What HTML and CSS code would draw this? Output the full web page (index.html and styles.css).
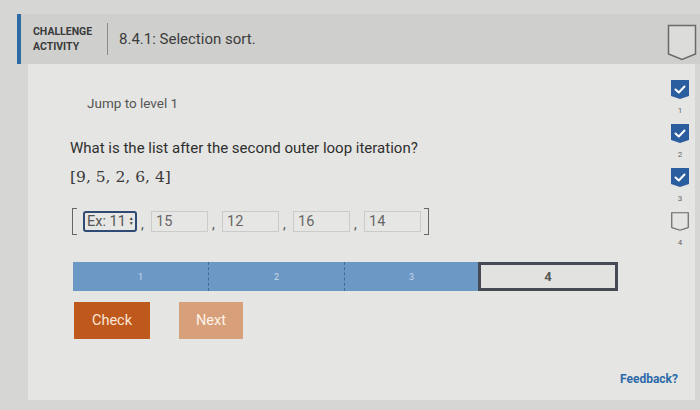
FILE: index.html
```html
<!DOCTYPE html>
<html>
<head>
<meta charset="utf-8">
<link rel="stylesheet" href="styles.css">
</head>
<body>
<div class="page">
  <div class="header">
    <div class="label">CHALLENGE<br>ACTIVITY</div>
    <div class="divider"></div>
    <div class="title">8.4.1: Selection sort.</div>
    <svg class="bigbox" width="30" height="37" viewBox="0 0 30 37">
      <path d="M1.5 1.5 H28.5 V30 L15 35.5 L1.5 30 Z" fill="#dcdcda" stroke="#6a6a6a" stroke-width="1.5"/>
    </svg>
  </div>
  <div class="card">
    <div class="content">
      <div class="main">
        <div class="jump">Jump to level 1</div>
        <div class="question">What is the list after the second outer loop iteration?</div>
        <div class="list">[9, 5, 2, 6, 4]</div>
        <div class="answer">
          <span class="bracket left"></span>
          <span class="inp active">Ex: 11<span class="spin">&#9650;<br>&#9660;</span></span>
          <span class="comma">,</span>
          <span class="inp">15</span>
          <span class="comma">,</span>
          <span class="inp">12</span>
          <span class="comma">,</span>
          <span class="inp">16</span>
          <span class="comma">,</span>
          <span class="inp">14</span>
          <span class="bracket right"></span>
        </div>
        <div class="progress">
          <div class="seg done">1</div>
          <div class="seg done">2</div>
          <div class="seg done last">3</div>
          <div class="seg current">4</div>
        </div>
        <div class="buttons">
          <div class="btn check">Check</div>
          <div class="btn next">Next</div>
        </div>
      </div>
      <div class="sidebar">
        <div class="lvl">
          <svg width="18" height="19" viewBox="0 0 18 19"><path d="M0 0 H18 V16 L9 19 L0 16 Z" fill="#2b5e9f"/><path d="M4.5 9.5 L7.8 12.5 L13.5 6.5" fill="none" stroke="#fff" stroke-width="2" stroke-linecap="round" stroke-linejoin="round"/></svg>
          <span>1</span>
        </div>
        <div class="lvl">
          <svg width="18" height="19" viewBox="0 0 18 19"><path d="M0 0 H18 V16 L9 19 L0 16 Z" fill="#2b5e9f"/><path d="M4.5 9.5 L7.8 12.5 L13.5 6.5" fill="none" stroke="#fff" stroke-width="2" stroke-linecap="round" stroke-linejoin="round"/></svg>
          <span>2</span>
        </div>
        <div class="lvl">
          <svg width="18" height="19" viewBox="0 0 18 19"><path d="M0 0 H18 V16 L9 19 L0 16 Z" fill="#2b5e9f"/><path d="M4.5 9.5 L7.8 12.5 L13.5 6.5" fill="none" stroke="#fff" stroke-width="2" stroke-linecap="round" stroke-linejoin="round"/></svg>
          <span>3</span>
        </div>
        <div class="lvl">
          <svg width="18" height="19" viewBox="0 0 18 19"><path d="M0.75 0.75 H17.25 V15.5 L9 18.2 L0.75 15.5 Z" fill="#e4e4e2" stroke="#666" stroke-width="1.2"/></svg>
          <span>4</span>
        </div>
      </div>
    </div>
    <div class="footer"><span class="feedback">Feedback?</span></div>
  </div>
</div>
</body>
</html>
```

FILE: styles.css
```css
html, body {
  margin: 0;
  padding: 0;
  background: #d6d7d5;
  font-family: Roboto, "Liberation Sans", sans-serif;
  color: #333;
}
.page {
  width: 700px;
  height: 410px;
  padding-top: 14px;
  box-sizing: border-box;
  overflow: hidden;
}
.header {
  margin-left: 17px;
  height: 50px;
  background: #cfd0ce;
  border-left: 4px solid #2e6aa6;
  display: flex;
  align-items: center;
  padding-right: 3px;
  box-sizing: border-box;
}
.label {
  padding-left: 12px;
  font-size: 10.5px;
  font-weight: 700;
  line-height: 15px;
  color: #3a3a3a;
  width: 62px;
}
.divider {
  width: 1px;
  height: 32px;
  background: #8a8a8a;
  margin-left: 12px;
  margin-right: 11px;
}
.title {
  font-size: 15px;
  color: #3b3b3b;
}
.bigbox {
  margin-left: auto;
  margin-top: 7px;
  display: block;
}
.card {
  margin-left: 28px;
  width: 667px;
  height: 336px;
  background: #e5e5e3;
  display: flex;
  flex-direction: column;
}
.content {
  display: flex;
  flex: 1;
}
.main {
  flex: 1;
  padding-left: 42px;
  padding-top: 31px;
}
.jump {
  margin-left: 17px;
  font-size: 13.5px;
  line-height: 16px;
  color: #555;
}
.question {
  margin-top: 27px;
  font-size: 15px;
  line-height: 20px;
  color: #2f2f2f;
}
.list {
  margin-top: 8px;
  font-family: "DejaVu Serif", "Liberation Serif", serif;
  font-size: 15.5px;
  line-height: 22px;
  color: #3a3a3a;
}
.answer {
  margin-top: 19px;
  display: flex;
  align-items: center;
  height: 28px;
  font-size: 14px;
  color: #555;
}
.bracket {
  width: 5px;
  height: 27px;
  border: 1.5px solid #666;
  box-sizing: border-box;
}
.bracket.left {
  border-right: none;
  margin-left: 2px;
  margin-right: 6px;
}
.bracket.right {
  border-left: none;
  margin-left: 3px;
}
.inp {
  width: 57px;
  height: 21px;
  border: 1px solid #cbcbc9;
  background: #e6e6e4;
  box-sizing: border-box;
  padding-left: 4px;
  line-height: 19px;
  font-size: 14.5px;
  color: #666;
  display: flex;
  align-items: center;
}
.inp.active {
  width: 54px;
  border: 2px solid #2f4a74;
  border-radius: 3px;
  padding-left: 2px;
  color: #555;
}
.spin {
  font-size: 5px;
  line-height: 5px;
  margin-left: 3px;
  color: #444;
}
.comma {
  width: 14px;
  padding-left: 4px;
  box-sizing: border-box;
  padding-top: 6px;
  font-size: 14px;
  color: #555;
}
.progress {
  margin-top: 27px;
  margin-left: 3px;
  width: 545px;
  height: 29px;
  display: flex;
}
.seg {
  display: flex;
  align-items: center;
  justify-content: center;
  box-sizing: border-box;
}
.seg.done {
  width: 136px;
  background: #6b98c4;
  border-right: 1px dashed #3e6a98;
  color: #c9d9ea;
  font-size: 9px;
}
.seg.done.last {
  width: 133px;
  border-right: none;
}
.seg.current {
  width: 140px;
  border: 3px solid #454a55;
  background: #e2e2e0;
  color: #555;
  font-size: 13px;
  font-weight: 700;
}
.buttons {
  margin-top: 11px;
  margin-left: 4px;
  display: flex;
  gap: 29px;
}
.btn {
  height: 37px;
  display: flex;
  align-items: center;
  justify-content: center;
  font-size: 14.5px;
}
.btn.check {
  width: 76px;
  background: #bf581c;
  color: #fbe6d6;
}
.btn.next {
  width: 64px;
  background: #d8a07a;
  color: #fdf1e6;
}
.sidebar {
  width: 18px;
  padding-right: 6px;
  padding-top: 16px;
  display: flex;
  flex-direction: column;
}
.lvl {
  display: flex;
  flex-direction: column;
  align-items: center;
  height: 44px;
}
.lvl svg {
  display: block;
}
.lvl span {
  margin-top: 7px;
  font-size: 8px;
  line-height: 10px;
  color: #666;
}
.footer {
  text-align: right;
  padding-right: 17px;
  padding-bottom: 13px;
}
.feedback {
  font-size: 12px;
  font-weight: 700;
  color: #2c6aa8;
}
```
